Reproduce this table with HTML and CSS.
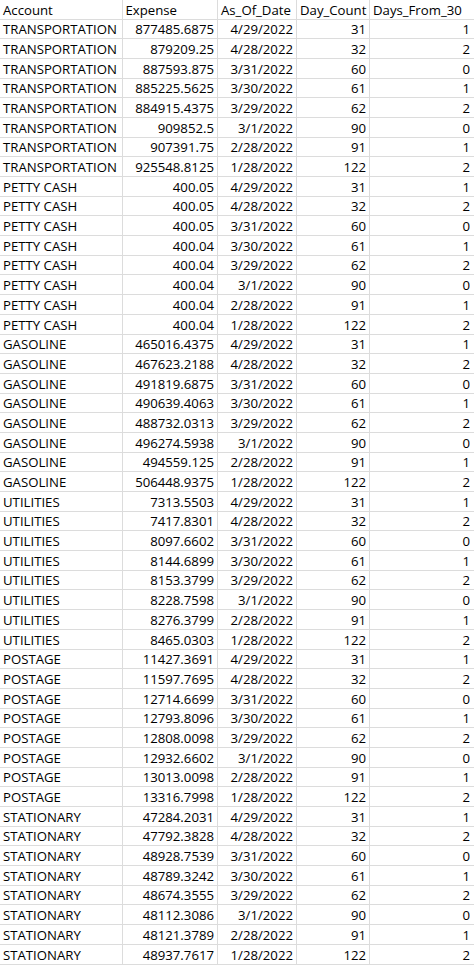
FILE: index.html
```html
<!DOCTYPE html>
<html>
<head>
<meta charset="utf-8">
<link rel="stylesheet" href="styles.css">
</head>
<body>
<div class="sheet">
<div class="row head"><span>Account</span><span>Expense</span><span>As_Of_Date</span><span>Day_Count</span><span>Days_From_30</span></div>
<div class="row"><span>TRANSPORTATION</span><span>877485.6875</span><span>4/29/2022</span><span>31</span><span>1</span></div>
<div class="row"><span>TRANSPORTATION</span><span>879209.25</span><span>4/28/2022</span><span>32</span><span>2</span></div>
<div class="row"><span>TRANSPORTATION</span><span>887593.875</span><span>3/31/2022</span><span>60</span><span>0</span></div>
<div class="row"><span>TRANSPORTATION</span><span>885225.5625</span><span>3/30/2022</span><span>61</span><span>1</span></div>
<div class="row"><span>TRANSPORTATION</span><span>884915.4375</span><span>3/29/2022</span><span>62</span><span>2</span></div>
<div class="row"><span>TRANSPORTATION</span><span>909852.5</span><span>3/1/2022</span><span>90</span><span>0</span></div>
<div class="row"><span>TRANSPORTATION</span><span>907391.75</span><span>2/28/2022</span><span>91</span><span>1</span></div>
<div class="row"><span>TRANSPORTATION</span><span>925548.8125</span><span>1/28/2022</span><span>122</span><span>2</span></div>
<div class="row"><span>PETTY CASH</span><span>400.05</span><span>4/29/2022</span><span>31</span><span>1</span></div>
<div class="row"><span>PETTY CASH</span><span>400.05</span><span>4/28/2022</span><span>32</span><span>2</span></div>
<div class="row"><span>PETTY CASH</span><span>400.05</span><span>3/31/2022</span><span>60</span><span>0</span></div>
<div class="row"><span>PETTY CASH</span><span>400.04</span><span>3/30/2022</span><span>61</span><span>1</span></div>
<div class="row"><span>PETTY CASH</span><span>400.04</span><span>3/29/2022</span><span>62</span><span>2</span></div>
<div class="row"><span>PETTY CASH</span><span>400.04</span><span>3/1/2022</span><span>90</span><span>0</span></div>
<div class="row"><span>PETTY CASH</span><span>400.04</span><span>2/28/2022</span><span>91</span><span>1</span></div>
<div class="row"><span>PETTY CASH</span><span>400.04</span><span>1/28/2022</span><span>122</span><span>2</span></div>
<div class="row"><span>GASOLINE</span><span>465016.4375</span><span>4/29/2022</span><span>31</span><span>1</span></div>
<div class="row"><span>GASOLINE</span><span>467623.2188</span><span>4/28/2022</span><span>32</span><span>2</span></div>
<div class="row"><span>GASOLINE</span><span>491819.6875</span><span>3/31/2022</span><span>60</span><span>0</span></div>
<div class="row"><span>GASOLINE</span><span>490639.4063</span><span>3/30/2022</span><span>61</span><span>1</span></div>
<div class="row"><span>GASOLINE</span><span>488732.0313</span><span>3/29/2022</span><span>62</span><span>2</span></div>
<div class="row"><span>GASOLINE</span><span>496274.5938</span><span>3/1/2022</span><span>90</span><span>0</span></div>
<div class="row"><span>GASOLINE</span><span>494559.125</span><span>2/28/2022</span><span>91</span><span>1</span></div>
<div class="row"><span>GASOLINE</span><span>506448.9375</span><span>1/28/2022</span><span>122</span><span>2</span></div>
<div class="row"><span>UTILITIES</span><span>7313.5503</span><span>4/29/2022</span><span>31</span><span>1</span></div>
<div class="row"><span>UTILITIES</span><span>7417.8301</span><span>4/28/2022</span><span>32</span><span>2</span></div>
<div class="row"><span>UTILITIES</span><span>8097.6602</span><span>3/31/2022</span><span>60</span><span>0</span></div>
<div class="row"><span>UTILITIES</span><span>8144.6899</span><span>3/30/2022</span><span>61</span><span>1</span></div>
<div class="row"><span>UTILITIES</span><span>8153.3799</span><span>3/29/2022</span><span>62</span><span>2</span></div>
<div class="row"><span>UTILITIES</span><span>8228.7598</span><span>3/1/2022</span><span>90</span><span>0</span></div>
<div class="row"><span>UTILITIES</span><span>8276.3799</span><span>2/28/2022</span><span>91</span><span>1</span></div>
<div class="row"><span>UTILITIES</span><span>8465.0303</span><span>1/28/2022</span><span>122</span><span>2</span></div>
<div class="row"><span>POSTAGE</span><span>11427.3691</span><span>4/29/2022</span><span>31</span><span>1</span></div>
<div class="row"><span>POSTAGE</span><span>11597.7695</span><span>4/28/2022</span><span>32</span><span>2</span></div>
<div class="row"><span>POSTAGE</span><span>12714.6699</span><span>3/31/2022</span><span>60</span><span>0</span></div>
<div class="row"><span>POSTAGE</span><span>12793.8096</span><span>3/30/2022</span><span>61</span><span>1</span></div>
<div class="row"><span>POSTAGE</span><span>12808.0098</span><span>3/29/2022</span><span>62</span><span>2</span></div>
<div class="row"><span>POSTAGE</span><span>12932.6602</span><span>3/1/2022</span><span>90</span><span>0</span></div>
<div class="row"><span>POSTAGE</span><span>13013.0098</span><span>2/28/2022</span><span>91</span><span>1</span></div>
<div class="row"><span>POSTAGE</span><span>13316.7998</span><span>1/28/2022</span><span>122</span><span>2</span></div>
<div class="row"><span>STATIONARY</span><span>47284.2031</span><span>4/29/2022</span><span>31</span><span>1</span></div>
<div class="row"><span>STATIONARY</span><span>47792.3828</span><span>4/28/2022</span><span>32</span><span>2</span></div>
<div class="row"><span>STATIONARY</span><span>48928.7539</span><span>3/31/2022</span><span>60</span><span>0</span></div>
<div class="row"><span>STATIONARY</span><span>48789.3242</span><span>3/30/2022</span><span>61</span><span>1</span></div>
<div class="row"><span>STATIONARY</span><span>48674.3555</span><span>3/29/2022</span><span>62</span><span>2</span></div>
<div class="row"><span>STATIONARY</span><span>48112.3086</span><span>3/1/2022</span><span>90</span><span>0</span></div>
<div class="row"><span>STATIONARY</span><span>48121.3789</span><span>2/28/2022</span><span>91</span><span>1</span></div>
<div class="row"><span>STATIONARY</span><span>48937.7617</span><span>1/28/2022</span><span>122</span><span>2</span></div>
</div>
</body>
</html>
```

FILE: styles.css
```css
html, body {
  margin: 0;
  padding: 0;
  background: #ffffff;
}

.sheet {
  display: flex;
  flex-direction: column;
  width: 474px;
  font-family: "Open Sans", "Liberation Sans", sans-serif;
  font-size: 13.2px;
  color: #000000;
}

.row {
  display: grid;
  grid-template-columns: 122.5px 95.5px 79px 73px 104px;
  height: 19.7px;
  flex: none;
}

.row.head {
  height: 19.5px;
}

.row span {
  display: flex;
  align-items: flex-end;
  justify-content: flex-end;
  box-sizing: border-box;
  border-right: 1px solid #dcdcdc;
  border-bottom: 1px solid #dcdcdc;
  padding: 0 3px 0 3px;
  line-height: 17px;
  white-space: nowrap;
  overflow: hidden;
}

.row span:first-child {
  justify-content: flex-start;
}

.row.head span {
  justify-content: flex-start;
}

.row span:last-child {
  border-right: none;
  padding-right: 4px;
}
```
